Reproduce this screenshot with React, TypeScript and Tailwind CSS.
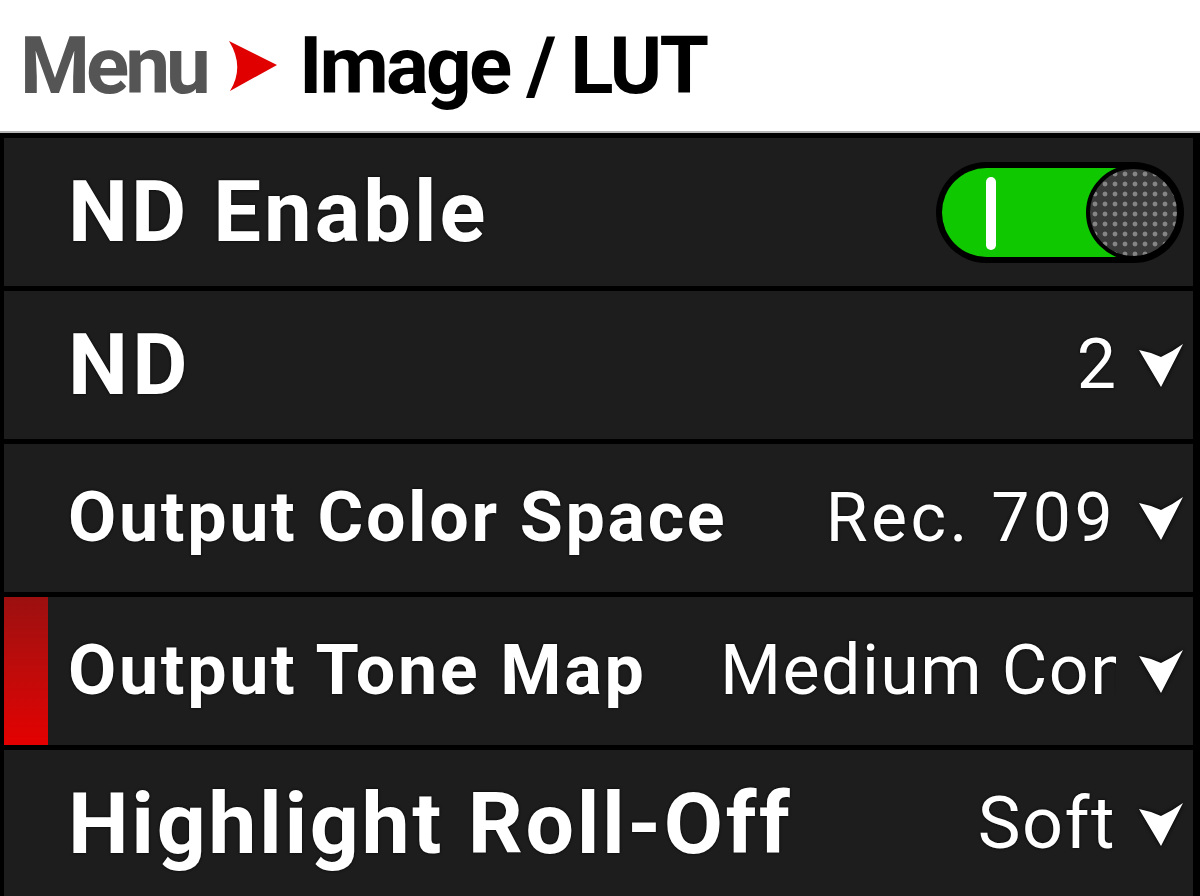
import React from 'react';

type Row = {
  label: string;
  labelClass: string;
  value?: string;
  valueClass?: string;
  toggle?: boolean;
  active?: boolean;
};

const rows: Row[] = [
  { label: 'ND Enable', labelClass: 'text-[85px] tracking-[0.035em]', toggle: true },
  { label: 'ND', labelClass: 'text-[85px] tracking-[0.05em]', value: '2', valueClass: 'text-[70px]' },
  { label: 'Output Color Space', labelClass: 'text-[70px] tracking-[0.038em]', value: 'Rec. 709', valueClass: 'text-[68px] tracking-[0.05em]' },
  { label: 'Output Tone Map', labelClass: 'text-[70px] tracking-[0.038em]', value: 'Medium Contrast', valueClass: 'text-[70px] tracking-[0.02em] max-w-[396px] overflow-hidden', active: true },
  { label: 'Highlight Roll-Off', labelClass: 'text-[86px] tracking-[0.03em]', value: 'Soft', valueClass: 'text-[72px] tracking-[0.02em]' },
];

const DownArrow = () => (
  <svg width="46" height="46" viewBox="0 0 46 46" className="shrink-0 drop-shadow-[0_0_2px_#000]">
    <path d="M1 8 Q12 10 23 15 Q34 10 45 2 L23 45 Z" fill="#fff" />
  </svg>
);

const Toggle = () => (
  <div className="relative w-[248px] h-[101px] rounded-full bg-black">
    <div className="absolute left-[6px] top-[6px] bottom-[6px] right-[60px] rounded-l-full bg-[#10c800]" />
    <div className="absolute left-[50px] top-[15px] w-[10px] h-[73px] rounded-full bg-white" />
    <div className="absolute right-[3px] top-[3px] w-[95px] h-[95px] rounded-full border-[4px] border-black bg-[#3a3a3a] bg-[radial-gradient(circle,#858585_2px,transparent_2.8px)] bg-[length:10px_10px]" />
  </div>
);

const App: React.FC = () => {
  return (
    <div className="w-[1200px] h-[896px] overflow-hidden bg-white font-['Roboto','Liberation_Sans',sans-serif]">
      {/* Breadcrumb header */}
      <div className="h-[133px] flex items-center pl-[20px] gap-[22px] border-b-2 border-[#b5b5b5]">
        <span className="text-[80px] font-bold text-[#555] tracking-[-0.05em] leading-none">Menu</span>
        <svg width="48" height="50" viewBox="0 0 48 50">
          <path d="M0 0 L48 24 L1 50 Q16 26 0 0 Z" fill="#e00000" />
        </svg>
        <span className="text-[80px] font-bold text-black tracking-[-0.035em] leading-none">Image / LUT</span>
      </div>

      {/* Settings list */}
      <div className="border-t-[5px] border-l-4 border-r-[7px] border-black bg-[#1d1d1d]">
        {rows.map((row) => (
          <div
            key={row.label}
            className="relative h-[153px] flex items-center pl-[64px] pr-[9px] border-b-[5px] border-black text-white [text-shadow:0_0_3px_#000]"
          >
            {row.active && (
              <div className="absolute left-0 top-0 bottom-0 w-[44px] bg-gradient-to-b from-[#9c0f0f] to-[#e40000]" />
            )}
            <span className={`${row.labelClass} font-bold leading-tight whitespace-nowrap`}>{row.label}</span>
            <div className="flex-1" />
            {row.toggle ? (
              <Toggle />
            ) : (
              <div className="flex items-center gap-[22px]">
                <span className={`${row.valueClass} leading-tight whitespace-nowrap text-right`}>{row.value}</span>
                <DownArrow />
              </div>
            )}
          </div>
        ))}
      </div>
    </div>
  );
};

export default App;
